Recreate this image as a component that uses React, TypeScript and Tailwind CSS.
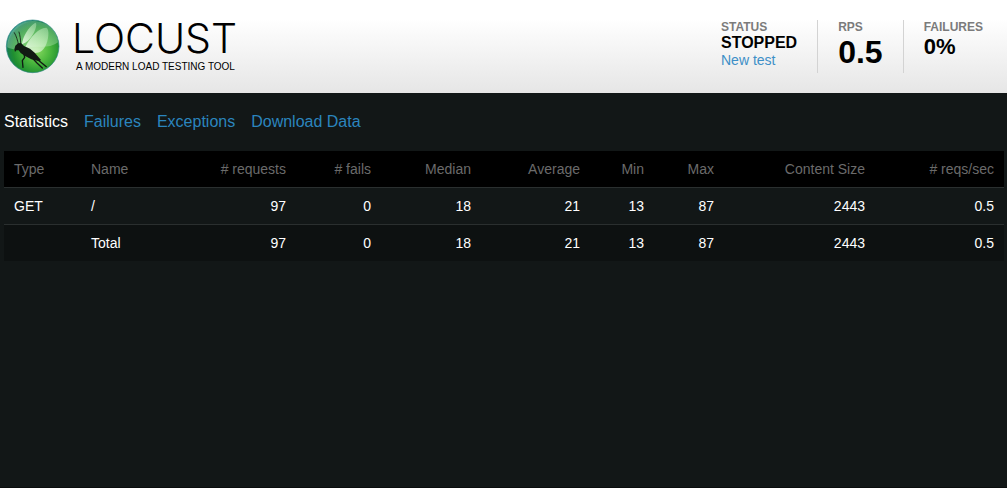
const stats = [
    { type: 'GET', name: '/', requests: 97, fails: 0, median: 18, average: 21, min: 13, max: 87, size: 2443, rps: 0.5 },
    { type: '', name: 'Total', requests: 97, fails: 0, median: 18, average: 21, min: 13, max: 87, size: 2443, rps: 0.5 },
]

const columns = [
    { title: 'Type', width: 'w-[7.7%]' },
    { title: 'Name', width: 'w-[12%]' },
    { title: '# requests', width: 'w-[9.5%]' },
    { title: '# fails', width: 'w-[8.5%]' },
    { title: 'Median', width: 'w-[10%]' },
    { title: 'Average', width: 'w-[10.9%]' },
    { title: 'Min', width: 'w-[6.4%]' },
    { title: 'Max', width: 'w-[7%]' },
    { title: 'Content Size', width: 'w-[15.1%]' },
    { title: '# reqs/sec', width: 'w-[12.9%]' },
]

const tabs = ['Statistics', 'Failures', 'Exceptions', 'Download Data']

function LogoMark() {
    return (
        <svg viewBox="0 0 240 210" className="h-[70px] w-20 shrink-0" aria-hidden="true">
            <defs>
                <radialGradient id="orb" cx="0.58" cy="0.58" r="0.6">
                    <stop offset="0" stopColor="#86d860" />
                    <stop offset="0.4" stopColor="#4cb83e" />
                    <stop offset="0.75" stopColor="#209030" />
                    <stop offset="0.92" stopColor="#177f4c" />
                    <stop offset="1" stopColor="#2f9488" />
                </radialGradient>
                <linearGradient id="shine" x1="0" y1="0" x2="0" y2="1">
                    <stop offset="0" stopColor="#d5f5dc" stopOpacity="0.25" />
                    <stop offset="1" stopColor="#d5f5dc" stopOpacity="0.32" />
                </linearGradient>
                <linearGradient id="wing" x1="1" y1="0" x2="0" y2="1">
                    <stop offset="0" stopColor="#c8efc4" stopOpacity="0.4" />
                    <stop offset="1" stopColor="#f4fff0" stopOpacity="0.85" />
                </linearGradient>
            </defs>
            <circle cx="98" cy="109" r="79" fill="url(#orb)" stroke="#2a8580" strokeWidth="2" />
            <path d="M22 112C22 66 56 33 98 33s74 28 76 64c-27 20-53 10-81 14-30 4-47 13-71 1z" fill="url(#shine)" />
            <path d="M66 103C68 80 86 50 106 38c7 2 0 23-7 35-8 14-19 25-33 30z" fill="url(#wing)" />
            <path d="M74 115C84 90 114 53 139 53c11 5 6 38-3 56-11 22-36 29-62 6z" fill="url(#wing)" />
            <g fill="none" stroke="#111a13" strokeLinecap="round" strokeLinejoin="round">
                <path d="M56 106C53 91 49 78 43 68M62 103C62 88 60 76 57 66" strokeWidth="2.5" />
                <path d="M70 123l4 19-7 10 2 20" strokeWidth="4" />
                <path d="M91 131l17 14 31 25M94 141l17 18 16 15" strokeWidth="4" />
            </g>
            <path d="M43 118l3-11 8-7 9-1 9 9 18 8 14 12 19 22-5 4-24-6-20-11-12-8-6-8-7 0-4 5z" fill="#111a13" />
        </svg>
    )
}

export default function App() {
    return (
        <div className="flex min-h-screen flex-col border-b border-[#0a0d0d] bg-[#121717] font-['Liberation_Sans',Arial,sans-serif] text-sm text-white">
            <header className="flex h-[93px] items-start justify-between bg-linear-to-b from-white from-20% to-[#e6e6e6] text-black">
                <a href="#" className="flex pt-[10px] text-black">
                    <LogoMark />
                    <span className="-ml-2 flex flex-col pt-1">
                        <span className="font-['Inter',sans-serif] text-[41px] leading-[48px] font-light">LOCUST</span>
                        <span className="pl-1 text-[10px] leading-[10px]">A MODERN LOAD TESTING TOOL</span>
                    </span>
                </a>
                <div className="flex pt-5 pr-6 font-bold">
                    <div className="h-[53px] pr-5">
                        <div className="text-xs leading-[14px] text-[#7b7b7b]">STATUS</div>
                        <div className="text-base leading-[18px]">STOPPED</div>
                        <a href="#" className="block text-sm leading-4 font-normal text-[#3d8fc7]">New test</a>
                    </div>
                    <div className="h-[53px] border-l border-[#d3d3d3] px-5">
                        <div className="text-xs leading-[14px] text-[#7b7b7b]">RPS</div>
                        <div className="text-[32px] leading-9">0.5</div>
                    </div>
                    <div className="h-[53px] border-l border-[#d3d3d3] pl-5">
                        <div className="text-xs leading-[14px] text-[#7b7b7b]">FAILURES</div>
                        <div className="text-[22px] leading-[26px]">0%</div>
                    </div>
                </div>
            </header>
            <nav className="flex gap-4 px-1 pt-[19px] pb-[19px] text-base leading-5">
                {tabs.map((tab, i) => (
                    <a href="#" key={tab} className={i === 0 ? 'text-white' : 'text-[#2b85be]'}>{tab}</a>
                ))}
            </nav>
            <main className="pr-[3px] pl-1">
                <table className="w-full table-fixed border-collapse">
                    <thead>
                        <tr className="h-9 bg-black text-[#6b6b6b]">
                            {columns.map((col, i) => (
                                <th key={col.title} scope="col" className={`${col.width} ${i < 2 ? 'text-left' : 'text-right'} px-[10px] font-normal whitespace-nowrap`}>{col.title}</th>
                            ))}
                        </tr>
                    </thead>
                    <tbody>
                        {stats.map((row) => (
                            <tr key={row.name} className="h-[37px] border-t border-[#2a2f2f] last:bg-[#0d1111]">
                                {Object.values(row).map((value, i) => (
                                    <td key={i} className={`${i < 2 ? 'text-left' : 'text-right'} px-[10px]`}>{value}</td>
                                ))}
                            </tr>
                        ))}
                    </tbody>
                </table>
            </main>
        </div>
    )
}
